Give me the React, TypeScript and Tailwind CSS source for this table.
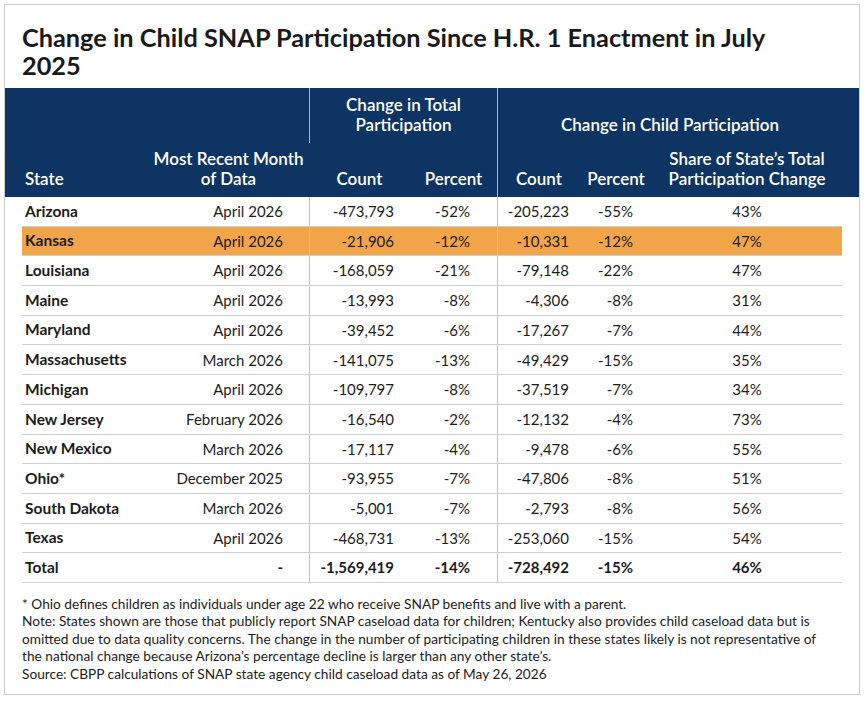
const rows = [
  ["Arizona", "April 2026", "-473,793", "-52%", "-205,223", "-55%", "43%"],
  ["Kansas", "April 2026", "-21,906", "-12%", "-10,331", "-12%", "47%"],
  ["Louisiana", "April 2026", "-168,059", "-21%", "-79,148", "-22%", "47%"],
  ["Maine", "April 2026", "-13,993", "-8%", "-4,306", "-8%", "31%"],
  ["Maryland", "April 2026", "-39,452", "-6%", "-17,267", "-7%", "44%"],
  ["Massachusetts", "March 2026", "-141,075", "-13%", "-49,429", "-15%", "35%"],
  ["Michigan", "April 2026", "-109,797", "-8%", "-37,519", "-7%", "34%"],
  ["New Jersey", "February 2026", "-16,540", "-2%", "-12,132", "-4%", "73%"],
  ["New Mexico", "March 2026", "-17,117", "-4%", "-9,478", "-6%", "55%"],
  ["Ohio*", "December 2025", "-93,955", "-7%", "-47,806", "-8%", "51%"],
  ["South Dakota", "March 2026", "-5,001", "-7%", "-2,793", "-8%", "56%"],
  ["Texas", "April 2026", "-468,731", "-13%", "-253,060", "-15%", "54%"],
];

const cols = "grid grid-cols-[126px_161px_101px_87px_83px_72px_190px]";

function Row({ r, total, hl }: { r: string[]; total?: boolean; hl?: boolean }) {
  return (
    <div
      className={`${cols} h-[29.7px] border-b border-[#cfcfcf] text-[15px] text-[#1c1c1c] ${
        hl ? "bg-[#f1a548]" : ""
      } ${total ? "font-bold" : ""}`}
    >
      <div className="flex items-center pl-[3px] font-bold text-[15.5px]">{r[0]}</div>
      <div className="flex items-center justify-end pr-[26px]">{r[1]}</div>
      <div className="flex items-center justify-end pr-[16px] border-l border-[#c4c4c4]">{r[2]}</div>
      <div className="flex items-center justify-end pr-[27px]">{r[3]}</div>
      <div className="flex items-center justify-end pr-[11px] border-l border-[#c4c4c4]">{r[4]}</div>
      <div className="flex items-center justify-end pr-[19px]">{r[5]}</div>
      <div className="flex items-center justify-center">{r[6]}</div>
    </div>
  );
}

export default function App() {
  return (
    <div className="w-[867px] h-[708px] bg-white pt-1 pl-1 font-['Lato',sans-serif]">
      <div className="w-[856px] h-[691px] border border-[#cccccc]">
        <h1 className="max-w-[790px] px-[17px] pt-[18px] text-[25.3px] leading-[28px] font-bold text-[#1a1a1a]">
          Change in Child SNAP Participation Since H.R. 1 Enactment in July 2025
        </h1>

        {/* header band */}
        <div className="mt-[9px] bg-[#0e3464] px-[17px] text-white text-[17px] leading-[20px] font-semibold">
          <div className={`${cols} h-[55px]`}>
            <div className="col-span-2" />
            <div className="col-span-2 flex items-end justify-center pb-[8px] text-center border-l border-[#a9b5c7]">
              Change in Total
              <br />
              Participation
            </div>
            <div className="col-span-3 flex items-end justify-center pb-[8px] border-l border-[#a9b5c7]">
              Change in Child Participation
            </div>
          </div>
          <div className={`${cols} h-[54px]`}>
            <div className="flex items-end pl-[3px] pb-[8px]">State</div>
            <div className="flex items-end justify-center pb-[8px] text-center">
              Most Recent Month
              <br />
              of Data
            </div>
            <div className="flex items-end justify-center pb-[8px]">Count</div>
            <div className="flex items-end justify-center pb-[8px]">Percent</div>
            <div className="flex items-end justify-center pb-[8px] border-l border-[#a9b5c7]">Count</div>
            <div className="flex items-end justify-center pb-[8px]">Percent</div>
            <div className="flex items-end justify-center pb-[8px] text-center">
              Share of State’s Total
              <br />
              Participation Change
            </div>
          </div>
        </div>

        {/* body */}
        <div className="px-[17px]">
          {rows.map((r) => (
            <Row key={r[0]} r={r} hl={r[0] === "Kansas"} />
          ))}
          <Row r={["Total", "-", "-1,569,419", "-14%", "-728,492", "-15%", "46%"]} total />

          <div className="max-w-[812px] mt-[12px] text-[13.7px] leading-[17.4px] text-[#1c1c1c]">
            <p>* Ohio defines children as individuals under age 22 who receive SNAP benefits and live with a parent.</p>
            <p>
              Note: States shown are those that publicly report SNAP caseload data for children; Kentucky also
              provides child caseload data but is omitted due to data quality concerns. The change in the number of
              participating children in these states likely is not representative of the national change because
              Arizona’s percentage decline is larger than any other state’s.
            </p>
            <p>Source: CBPP calculations of SNAP state agency child caseload data as of May 26, 2026</p>
          </div>
        </div>
      </div>
    </div>
  );
}
